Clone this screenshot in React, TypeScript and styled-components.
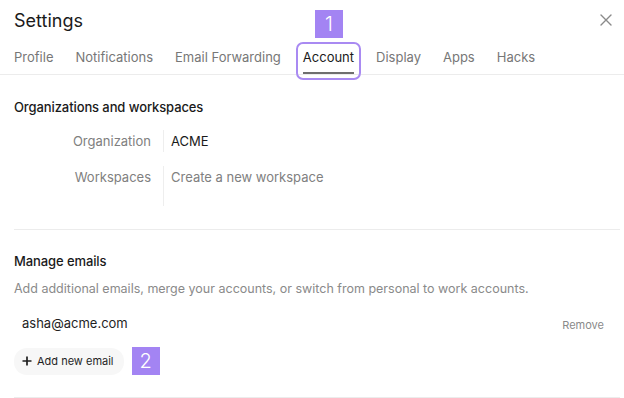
import React from 'react';
import styled, { createGlobalStyle } from 'styled-components';

const tabs = ['Profile', 'Notifications', 'Email Forwarding', 'Account', 'Display', 'Apps', 'Hacks'];

const GlobalStyle = createGlobalStyle`
  html, body {
    margin: 0;
    padding: 0;
    background: #ffffff;
  }
  body {
    font-family: Inter, "Noto Sans", "Liberation Sans", sans-serif;
    color: #1f1f1f;
    -webkit-font-smoothing: antialiased;
  }
`;

const App = () => {
  return (
    <>
      <GlobalStyle />
      <Panel>
        <Header>
          <Title>Settings</Title>
          <CloseButton aria-label="Close">
            <svg width="12" height="12" viewBox="0 0 12 12">
              <path d="M1 1 L11 11 M11 1 L1 11" stroke="#8a8a8a" strokeWidth="1.4" strokeLinecap="round" />
            </svg>
          </CloseButton>
        </Header>

        <TabBar>
          {tabs.map(tab => (
            <Tab key={tab} $active={tab === 'Account'}>
              {tab}
              {tab === 'Account' && <TabBadge>1</TabBadge>}
            </Tab>
          ))}
        </TabBar>

        <Section>
          <SectionTitle>Organizations and workspaces</SectionTitle>
          <OrgTable>
            <OrgRow>
              <OrgLabel>Organization</OrgLabel>
              <OrgValue>ACME</OrgValue>
            </OrgRow>
            <OrgRow>
              <OrgLabel>Workspaces</OrgLabel>
              <OrgValue $muted $tall>
                Create a new workspace
              </OrgValue>
            </OrgRow>
          </OrgTable>
        </Section>

        <Section $last>
          <SectionTitle>Manage emails</SectionTitle>
          <Description>
            Add additional emails, merge your accounts, or switch from personal to work accounts.
          </Description>
          <EmailRow>
            <EmailAddress>asha@acme.com</EmailAddress>
            <RemoveLink>Remove</RemoveLink>
          </EmailRow>
          <ActionRow>
            <AddButton>
              <svg width="10" height="10" viewBox="0 0 10 10">
                <path d="M5 0.5 V9.5 M0.5 5 H9.5" stroke="#1f1f1f" strokeWidth="1.7" />
              </svg>
              Add new email
            </AddButton>
            <StepBadge>2</StepBadge>
          </ActionRow>
        </Section>
      </Panel>
    </>
  );
};

const Panel = styled.div`
  width: 624px;
  height: 398px;
  overflow: hidden;
  background: #ffffff;
`;

const Header = styled.div`
  display: flex;
  justify-content: space-between;
  align-items: center;
  height: 40px;
  padding: 0 7px 0 14px;
`;

const Title = styled.h1`
  margin: 0;
  font-size: 18px;
  font-weight: 400;
  color: #1a1a1a;
`;

const CloseButton = styled.button`
  display: flex;
  align-items: center;
  justify-content: center;
  width: 22px;
  height: 22px;
  padding: 0;
  border: none;
  background: none;
  cursor: pointer;
`;

const TabBar = styled.div`
  display: flex;
  gap: 22px;
  height: 34px;
  padding: 0 14px;
  border-bottom: 1px solid #ececec;
`;

const Tab = styled.div<{ $active?: boolean }>`
  position: relative;
  display: flex;
  align-items: center;
  height: 34px;
  font-size: 13px;
  color: ${props => (props.$active ? '#1a1a1a' : '#777777')};
  white-space: nowrap;

  &::after {
    content: '';
    position: absolute;
    left: 0;
    right: 0;
    bottom: 0;
    height: 2px;
    background: ${props => (props.$active ? '#6f6f6f' : 'transparent')};
  }

  ${props =>
    props.$active &&
    `
    &::before {
      content: '';
      position: absolute;
      left: -7px;
      right: -7px;
      top: 2px;
      bottom: -6px;
      border: 2px solid #a98af2;
      border-radius: 7px;
    }
  `}
`;

const Badge = styled.span`
  display: flex;
  align-items: center;
  justify-content: center;
  width: 28px;
  height: 28px;
  background: #a384f3;
  color: #ffffff;
  font-size: 20px;
  font-weight: 300;
`;

const TabBadge = styled(Badge)`
  position: absolute;
  left: 12px;
  top: -30px;
`;

const StepBadge = styled(Badge)``;

const Section = styled.div<{ $last?: boolean }>`
  margin: 0 4px 0 14px;
  padding: ${props => (props.$last ? '22px 0 22px' : '23px 0 23px')};
  border-bottom: 1px solid #ececec;
`;

const SectionTitle = styled.h2`
  margin: 0;
  font-size: 13px;
  font-weight: 500;
  line-height: 18px;
  letter-spacing: -0.1px;
  color: #1a1a1a;
`;

const OrgTable = styled.div`
  display: flex;
  flex-direction: column;
  gap: 14px;
  margin-top: 14px;
  padding-left: 57px;
`;

const OrgRow = styled.div`
  display: flex;
`;

const OrgLabel = styled.div`
  width: 92px;
  padding-right: 12px;
  box-sizing: border-box;
  text-align: right;
  font-size: 13px;
  line-height: 22px;
  color: #808080;
`;

const OrgValue = styled.div<{ $muted?: boolean; $tall?: boolean }>`
  min-height: ${props => (props.$tall ? '40px' : '22px')};
  padding-left: 7px;
  border-left: 1px solid #eeeeee;
  font-size: 13px;
  line-height: 22px;
  color: ${props => (props.$muted ? '#808080' : '#1a1a1a')};
`;

const Description = styled.p`
  margin: 10px 0 0;
  font-size: 12.5px;
  line-height: 18px;
  color: #8a8a8a;
`;

const EmailRow = styled.div`
  display: flex;
  justify-content: space-between;
  align-items: center;
  margin-top: 15px;
  padding: 0 16px 0 8px;
`;

const EmailAddress = styled.span`
  font-size: 13px;
  color: #1f1f1f;
`;

const RemoveLink = styled.span`
  margin-top: 5px;
  font-size: 11px;
  color: #8a8a8a;
  cursor: pointer;
`;

const ActionRow = styled.div`
  display: flex;
  align-items: center;
  gap: 8px;
  margin-top: 15px;
`;

const AddButton = styled.button`
  display: flex;
  align-items: center;
  gap: 5px;
  height: 27px;
  padding: 0 10px 0 8px;
  border: none;
  border-radius: 13px;
  background: #f7f7f7;
  font-family: inherit;
  font-size: 11px;
  color: #1f1f1f;
  cursor: pointer;
`;

export default App;
